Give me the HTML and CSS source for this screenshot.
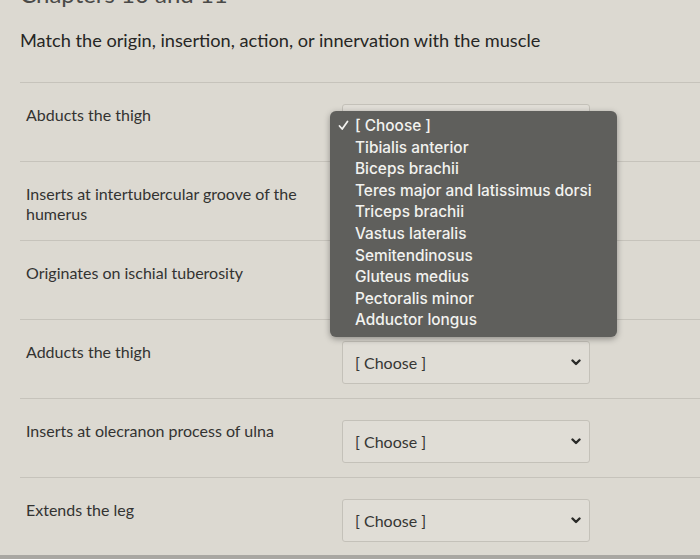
FILE: index.html
```html
<!DOCTYPE html>
<html>
<head>
  <title>Chapters 10 and 11</title>
  <link rel="stylesheet" href="styles.css">
</head>
<body>
  <div class="page">
    <h2 class="chapter">Chapters 10 and 11</h2>
    <p class="question">Match the origin, insertion, action, or innervation with the muscle</p>

    <div class="rows">
      <div class="row">
        <div class="label">Abducts the thigh</div>
        <div class="answer">
          <div class="select"><span>[ Choose ]</span><svg class="caret" width="10" height="7" viewBox="0 0 10 7"><polyline points="1.5,1.5 5,5 8.5,1.5"/></svg></div>
          <!-- open dropdown for the first answer -->
          <ul class="menu">
            <li class="checked"><svg class="tick" width="11" height="11" viewBox="0 0 11 11"><polyline points="1.5,6 4.2,9 9.5,1.5"/></svg>[ Choose ]</li>
            <li>Tibialis anterior</li>
            <li>Biceps brachii</li>
            <li>Teres major and latissimus dorsi</li>
            <li>Triceps brachii</li>
            <li>Vastus lateralis</li>
            <li>Semitendinosus</li>
            <li>Gluteus medius</li>
            <li>Pectoralis minor</li>
            <li>Adductor longus</li>
          </ul>
        </div>
      </div>

      <div class="row">
        <div class="label">Inserts at intertubercular groove of the humerus</div>
        <div class="answer">
          <div class="select"><span>[ Choose ]</span><svg class="caret" width="10" height="7" viewBox="0 0 10 7"><polyline points="1.5,1.5 5,5 8.5,1.5"/></svg></div>
        </div>
      </div>

      <div class="row">
        <div class="label">Originates on ischial tuberosity</div>
        <div class="answer">
          <div class="select"><span>[ Choose ]</span><svg class="caret" width="10" height="7" viewBox="0 0 10 7"><polyline points="1.5,1.5 5,5 8.5,1.5"/></svg></div>
        </div>
      </div>

      <div class="row">
        <div class="label">Adducts the thigh</div>
        <div class="answer">
          <div class="select"><span>[ Choose ]</span><svg class="caret" width="10" height="7" viewBox="0 0 10 7"><polyline points="1.5,1.5 5,5 8.5,1.5"/></svg></div>
        </div>
      </div>

      <div class="row">
        <div class="label">Inserts at olecranon process of ulna</div>
        <div class="answer">
          <div class="select"><span>[ Choose ]</span><svg class="caret" width="10" height="7" viewBox="0 0 10 7"><polyline points="1.5,1.5 5,5 8.5,1.5"/></svg></div>
        </div>
      </div>

      <div class="row last">
        <div class="label">Extends the leg</div>
        <div class="answer">
          <div class="select"><span>[ Choose ]</span><svg class="caret" width="10" height="7" viewBox="0 0 10 7"><polyline points="1.5,1.5 5,5 8.5,1.5"/></svg></div>
        </div>
      </div>
    </div>
  </div>
</body>
</html>
```

FILE: styles.css
```css
html, body {
  margin: 0;
  padding: 0;
  height: 100%;
  overflow: hidden;
}
body {
  font-family: Lato, "Open Sans", sans-serif;
  background-color: #a9a7a2;
  color: #2e2e2c;
}
.page {
  height: 555px;
  overflow: hidden;
  box-sizing: border-box;
  padding-left: 20px;
  background-color: #dcd9d1;
}
.chapter {
  margin: -18px 0 0 0;
  font-size: 24px;
  line-height: 24px;
  font-weight: normal;
  color: #4a4a48;
}
.question {
  margin: 22px 0 0 0;
  font-size: 18.2px;
  line-height: 24px;
  color: #262624;
}
.rows {
  margin-top: 30px;
  border-top: 1px solid #c6c3bb;
}
.row {
  display: flex;
  height: 79px;
  box-sizing: border-box;
  padding-top: 21px;
  border-bottom: 1px solid #c6c3bb;
}
.row.last {
  border-bottom: none;
}
.label {
  width: 290px;
  padding: 1px 0 0 6px;
  font-size: 16px;
  line-height: 20px;
  color: #333331;
}
.answer {
  position: relative;
  margin-left: 26px;
}
.select {
  display: flex;
  align-items: center;
  justify-content: space-between;
  width: 248px;
  height: 43px;
  box-sizing: border-box;
  padding: 0 8px 0 12px;
  border: 1px solid #c4c1b9;
  border-radius: 3px;
  background-color: #e0ddd6;
  font-size: 16px;
  color: #363634;
}
.caret polyline {
  fill: none;
  stroke: #2a2a28;
  stroke-width: 2.4;
  stroke-linecap: round;
  stroke-linejoin: round;
}
.menu {
  position: absolute;
  z-index: 10;
  left: -12px;
  top: 7px;
  width: 287px;
  margin: 0;
  padding: 4px 0 6px 0;
  list-style: none;
  background-color: #5f5f5c;
  border-radius: 6px;
  box-shadow: 0 2px 6px rgba(0, 0, 0, 0.35);
  font-family: Inter, "Noto Sans", sans-serif;
  font-weight: 500;
  font-size: 15.4px;
  line-height: 21.6px;
  color: #f2f2ef;
}
.menu li {
  padding-left: 25px;
  position: relative;
}
.tick {
  position: absolute;
  left: 8px;
  top: 5px;
}
.tick polyline {
  fill: none;
  stroke: #f2f2ef;
  stroke-width: 1.8;
  stroke-linecap: round;
  stroke-linejoin: round;
}
```
